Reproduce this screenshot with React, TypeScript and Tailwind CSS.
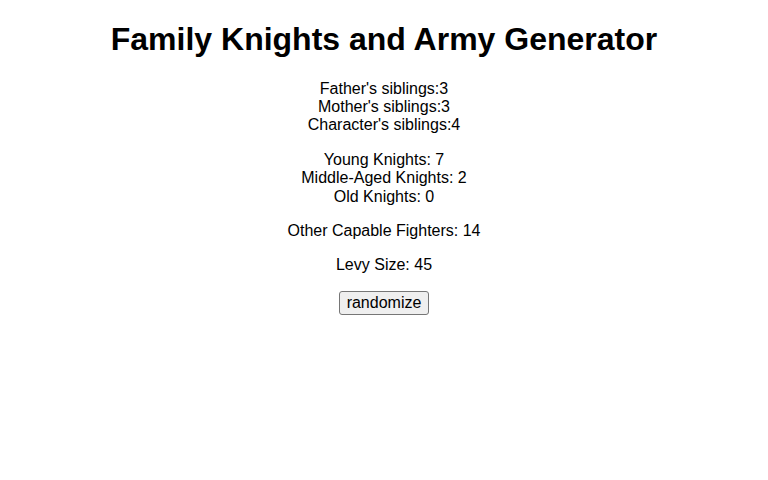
import React, { useState } from 'react';

const App: React.FC = () => {
  const [stats] = useState({
    father: 3,
    mother: 3,
    character: 4,
    young: 7,
    middle: 2,
    old: 0,
    others: 14,
    levy: 45,
  });

  return (
    <div className="min-h-screen bg-white text-black text-center font-['Liberation_Sans',Arial,sans-serif] text-base leading-[1.15] pt-[21.44px]">
      <h1 className="text-[32px] font-bold leading-[1.15] mb-[21.44px]">
        Family Knights and Army Generator
      </h1>

      <p className="my-4">
        Father's siblings:{stats.father}
        <br />
        Mother's siblings:{stats.mother}
        <br />
        Character's siblings:{stats.character}
      </p>

      <p className="my-4">
        Young Knights: {stats.young}
        <br />
        Middle-Aged Knights: {stats.middle}
        <br />
        Old Knights: {stats.old}
      </p>

      <p className="my-4">Other Capable Fighters: {stats.others}</p>

      <p className="my-4">Levy Size: {stats.levy}</p>

      <button className="h-6 bg-[#efefef] border border-[#767676] rounded-[3px] px-[7px] text-base leading-[1.15] text-black">
        randomize
      </button>
    </div>
  );
};

export default App;
